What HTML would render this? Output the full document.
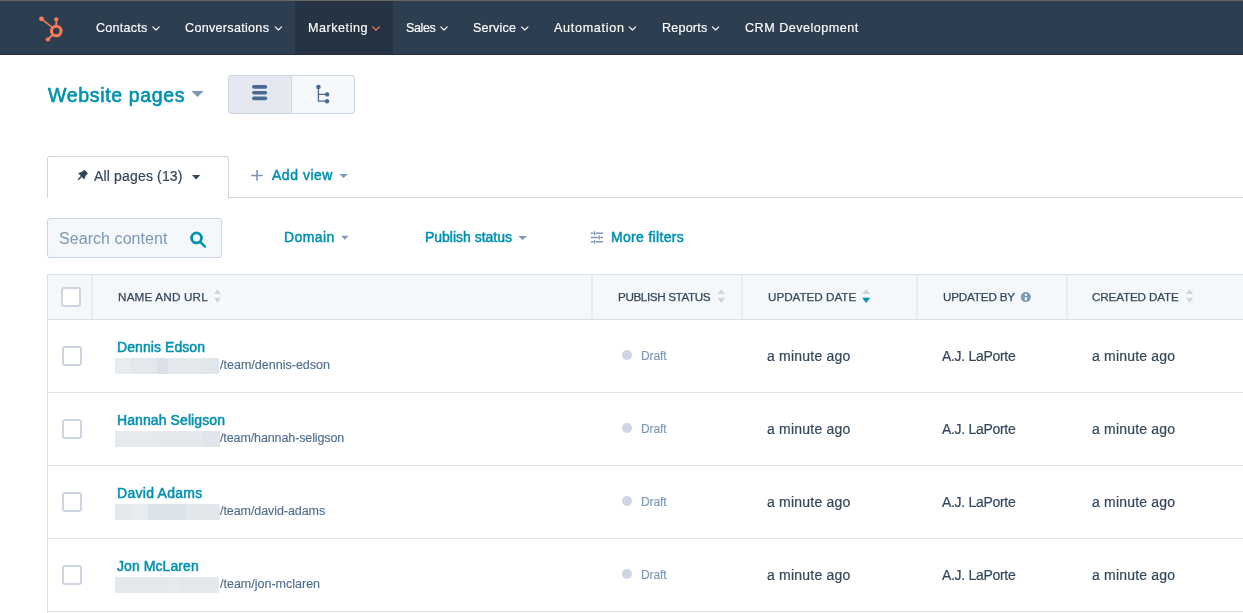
<!DOCTYPE html>
<html><head><meta charset="utf-8">
<style>
html,body{margin:0;padding:0;}
body{width:1243px;height:613px;overflow:hidden;position:relative;background:#fff;font-family:"Liberation Sans",sans-serif;}
.t{position:absolute;white-space:nowrap;will-change:transform;}
.a{position:absolute;}
svg{position:absolute;overflow:visible;}
</style></head><body>
<!-- top line + nav -->
<div class="a" style="left:0;top:0;width:1243px;height:1px;background:#676767"></div>
<div class="a" style="left:0;top:1px;width:1243px;height:54px;background:#2d3e50"></div>
<div class="a" style="left:0;top:54px;width:1243px;height:1px;background:#223143"></div>
<div class="a" style="left:295px;top:1px;width:98px;height:53px;background:#253342"></div>
<!-- logo -->
<svg style="left:0;top:0" width="1243" height="60">
 <g fill="#ff7a59" stroke="#ff7a59">
  <circle cx="56.3" cy="31" r="4.8" fill="none" stroke-width="3"/>
  <line x1="41.5" y1="18.8" x2="53" y2="28" stroke-width="1.6"/>
  <line x1="56.3" y1="19.5" x2="56.3" y2="26" stroke-width="1.8"/>
  <line x1="47.8" y1="39.5" x2="53" y2="34.5" stroke-width="1.8"/>
  <circle cx="41.5" cy="18.8" r="2.4" stroke="none"/>
  <circle cx="56.3" cy="19.3" r="2.1" stroke="none"/>
  <circle cx="47.8" cy="39.5" r="2.1" stroke="none"/>
 </g>
 <g fill="none" stroke="#ffffff" stroke-width="1.1" stroke-linecap="round" stroke-linejoin="round">
  <polyline points="152.8,26.8 156,30 159.2,26.8"/>
  <polyline points="275.2,26.8 278.4,30 281.6,26.8"/>
  <polyline points="440.8,26.8 444,30 447.2,26.8"/>
  <polyline points="521.6,26.8 524.8,30 528,26.8"/>
  <polyline points="629.2,26.8 632.4,30 635.6,26.8"/>
  <polyline points="712.4,26.8 715.6,30 718.8,26.8"/>
 </g>
 <polyline points="372.6,26.8 376,30.2 379.4,26.8" fill="none" stroke="#ff7a59" stroke-width="1.2" stroke-linecap="round" stroke-linejoin="round"/>
</svg>
<!-- title caret -->
<svg style="left:0;top:0" width="1" height="1">
 <polygon points="191.3,91 203.7,91 197.5,97" fill="#7c98b6"/>
</svg>
<!-- toggle -->
<div class="a" style="left:228px;top:75px;width:125px;height:37px;border:1px solid #cbd6e2;border-radius:3px;background:#f5f8fa;overflow:hidden">
  <div class="a" style="left:0;top:0;width:62px;height:37px;background:#e5e8f0;border-right:1px solid #cbd6e2"></div>
</div>
<svg style="left:0;top:0" width="1" height="1">
 <g fill="#4a6a92">
  <rect x="252" y="85" width="15.2" height="3.7" rx="1.8"/>
  <rect x="252" y="90.9" width="15.2" height="3.7" rx="1.8"/>
  <rect x="252" y="96.5" width="15.2" height="3.7" rx="1.8"/>
  <circle cx="318.4" cy="87" r="2.3"/>
  <circle cx="327.1" cy="94.4" r="2.2"/>
  <circle cx="327.1" cy="101.2" r="2.2"/>
 </g>
 <path d="M318.4,87 V101.2 H327 M318.4,94.4 H327" fill="none" stroke="#4a6a92" stroke-width="1.3"/>
</svg>
<!-- tabs -->
<div class="a" style="left:229px;top:197px;width:1014px;height:1px;background:#cbd6e2"></div>
<div class="a" style="left:47px;top:156px;width:180px;height:41px;border:1px solid #cbd6e2;border-bottom:none;border-radius:3px 3px 0 0;background:#fff"></div>
<svg style="left:0;top:0" width="1" height="1">
 <path d="M84.43,169.82 L87.95,173.34 L85.75,175.69 L84.28,179.51 L78.11,173.19 L81.93,171.87 Z" fill="#33475b"/><line x1="81.4" y1="176.4" x2="78.6" y2="179.3" stroke="#33475b" stroke-width="1.5" stroke-linecap="round"/>
 <polygon points="192,175 200.3,175 196.15,179.4" fill="#33475b"/>
 <path d="M257,170.1 V180.8 M251.2,175.5 H262.8" stroke="#7c98b6" stroke-width="1.6" fill="none"/>
 <polygon points="339.4,174 347.7,174 343.55,178" fill="#7c98b6"/>
</svg>
<!-- search -->
<div class="a" style="left:47px;top:218px;width:173px;height:38px;border:1px solid #cbd6e2;border-radius:3px;background:#f5f8fa"></div>
<svg style="left:0;top:0" width="1" height="1">
 <circle cx="196.5" cy="237.9" r="4.95" fill="none" stroke="#0091ae" stroke-width="2.8"/>
 <line x1="200.2" y1="241.8" x2="205" y2="246.6" stroke="#0091ae" stroke-width="2.4" stroke-linecap="round"/>
 <polygon points="341.1,235.8 348.6,235.8 344.85,239.7" fill="#7c98b6"/>
 <polygon points="518.3,236 526.8,236 522.55,240" fill="#7c98b6"/>
 <g stroke="#7c98b6" stroke-width="1.3" fill="none">
  <path d="M590.8,233.2 H593.4 M595.6,233.2 H603 M590.8,237.5 H598.2 M600.4,237.5 H603 M590.8,241.8 H593.4 M595.6,241.8 H603" stroke-width="1.5"/>
  <path d="M594.5,231.3 V235.1 M599.3,235.6 V239.4 M594.5,239.9 V243.7" stroke-width="1.3"/>
 </g>
</svg>
<!-- table -->
<div class="a" style="left:47px;top:274px;width:1196px;height:1px;background:#dbe0e7"></div>
<div class="a" style="left:47px;top:275px;width:1196px;height:44px;background:#f5f8fa"></div>
<div class="a" style="left:47px;top:319px;width:1196px;height:1px;background:#dbe0e7"></div>
<div class="a" style="left:47px;top:274px;width:1px;height:339px;background:#dde2ea"></div>
<div class="a" style="left:91px;top:275px;width:2px;height:44px;background:#e8ebef"></div>
<div class="a" style="left:591px;top:275px;width:2px;height:44px;background:#e8ebef"></div>
<div class="a" style="left:741px;top:275px;width:2px;height:44px;background:#e8ebef"></div>
<div class="a" style="left:916px;top:275px;width:2px;height:44px;background:#e8ebef"></div>
<div class="a" style="left:1066px;top:275px;width:2px;height:44px;background:#e8ebef"></div>
<div class="a" style="left:47px;top:392px;width:1196px;height:1px;background:#dfe3eb"></div>
<div class="a" style="left:47px;top:465px;width:1196px;height:1px;background:#dfe3eb"></div>
<div class="a" style="left:47px;top:538px;width:1196px;height:1px;background:#dfe3eb"></div>
<div class="a" style="left:47px;top:611px;width:1196px;height:1px;background:#dfe3eb"></div>
<!-- checkboxes -->
<div class="a" style="left:61px;top:287px;width:16px;height:16px;border:2px solid #cbd6e2;border-radius:3px;background:#fff"></div>
<div class="a" style="left:62px;top:346px;width:16px;height:16px;border:2px solid #cbd6e2;border-radius:3px;background:#fff"></div>
<div class="a" style="left:62px;top:419px;width:16px;height:16px;border:2px solid #cbd6e2;border-radius:3px;background:#fff"></div>
<div class="a" style="left:62px;top:492px;width:16px;height:16px;border:2px solid #cbd6e2;border-radius:3px;background:#fff"></div>
<div class="a" style="left:62px;top:565px;width:16px;height:16px;border:2px solid #cbd6e2;border-radius:3px;background:#fff"></div>
<!-- sort icons -->
<svg style="left:0;top:0" width="1" height="1">
 <g fill="#cbd6e2">
  <polygon points="214.2,293.9 220.8,293.9 217.5,289.3"/><polygon points="214.2,297.7 220.8,297.7 217.5,302.9"/>
  <polygon points="717.4,293.9 725,293.9 721.2,289.3"/><polygon points="717.4,297.7 725,297.7 721.2,302.9"/>
  <polygon points="862.1,293.9 870.2,293.9 866.15,289.3"/>
  <polygon points="1185.9,293.9 1193.3,293.9 1189.6,289.3"/><polygon points="1185.9,297.7 1193.3,297.7 1189.6,302.9"/>
 </g>
 <polygon points="862.1,297.7 870.2,297.7 866.15,302.9" fill="#0091ae"/>
 <circle cx="1025.8" cy="297.1" r="5" fill="#7c98b6"/>
 <rect x="1024.85" y="293.9" width="1.95" height="1.9" fill="#fff"/>
 <rect x="1024.85" y="297.3" width="1.95" height="3" fill="#fff"/>
 <g fill="#cbd6e2">
  <circle cx="627" cy="355" r="5"/><circle cx="627" cy="428" r="5"/><circle cx="627" cy="501" r="5"/><circle cx="627" cy="574" r="5"/>
 </g>
</svg>
<!-- redacted blocks -->
<div class="a" style="left:115px;top:358px;height:16px;width:16px;background:#e8ecf0"></div>
<div class="a" style="left:131px;top:358px;height:16px;width:26px;background:#e4e8ed"></div>
<div class="a" style="left:157px;top:358px;height:16px;width:11px;background:#d9e0e8"></div>
<div class="a" style="left:168px;top:358px;height:16px;width:34px;background:#e4e8ed"></div>
<div class="a" style="left:202px;top:358px;height:16px;width:17px;background:#e1e6ea"></div>
<div class="a" style="left:115px;top:431px;height:16px;width:39px;background:#e6eaee"></div>
<div class="a" style="left:154px;top:431px;height:16px;width:49px;background:#e5e9ed"></div>
<div class="a" style="left:203px;top:431px;height:16px;width:17px;background:#e1e5eb"></div>
<div class="a" style="left:115px;top:504px;height:16px;width:17px;background:#e5e9ee"></div>
<div class="a" style="left:132px;top:504px;height:16px;width:16px;background:#e8ecf0"></div>
<div class="a" style="left:148px;top:504px;height:16px;width:37px;background:#dce2e9"></div>
<div class="a" style="left:185px;top:504px;height:16px;width:35px;background:#e3e7ec"></div>
<div class="a" style="left:115px;top:577px;height:16px;width:53px;background:#e5e9ed"></div>
<div class="a" style="left:168px;top:577px;height:16px;width:11px;background:#e6eaee"></div>
<div class="a" style="left:179px;top:577px;height:16px;width:14px;background:#e3e8ec"></div>
<div class="a" style="left:193px;top:577px;height:16px;width:26px;background:#e5e9ee"></div>
<div class="t" style="left:95.50px;top:22.13px;font-size:12.6px;line-height:12.6px;color:#ffffff;-webkit-text-stroke:0.15px #ffffff;letter-spacing:0.243px;">Contacts</div>
<div class="t" style="left:184.80px;top:22.13px;font-size:12.6px;line-height:12.6px;color:#ffffff;-webkit-text-stroke:0.15px #ffffff;letter-spacing:0.288px;">Conversations</div>
<div class="t" style="left:307.50px;top:22.13px;font-size:12.6px;line-height:12.6px;color:#ffffff;-webkit-text-stroke:0.15px #ffffff;letter-spacing:0.525px;">Marketing</div>
<div class="t" style="left:405.50px;top:22.13px;font-size:12.6px;line-height:12.6px;color:#ffffff;-webkit-text-stroke:0.15px #ffffff;letter-spacing:-0.425px;">Sales</div>
<div class="t" style="left:473.40px;top:22.13px;font-size:12.6px;line-height:12.6px;color:#ffffff;-webkit-text-stroke:0.15px #ffffff;letter-spacing:0.167px;">Service</div>
<div class="t" style="left:553.90px;top:22.13px;font-size:12.6px;line-height:12.6px;color:#ffffff;-webkit-text-stroke:0.15px #ffffff;letter-spacing:0.694px;">Automation</div>
<div class="t" style="left:662.10px;top:22.13px;font-size:12.6px;line-height:12.6px;color:#ffffff;-webkit-text-stroke:0.15px #ffffff;letter-spacing:0.183px;">Reports</div>
<div class="t" style="left:745.20px;top:22.13px;font-size:12.6px;line-height:12.6px;color:#ffffff;-webkit-text-stroke:0.15px #ffffff;letter-spacing:0.496px;">CRM Development</div>
<div class="t" style="left:47.50px;top:86.29px;font-size:19.5px;line-height:19.5px;color:#0091ae;-webkit-text-stroke:0.6px #0091ae;letter-spacing:0.662px;">Website pages</div>
<div class="t" style="left:94.40px;top:169.05px;font-size:14px;line-height:14px;color:#33475b;-webkit-text-stroke:0.2px #33475b;letter-spacing:0.162px;">All pages (13)</div>
<div class="t" style="left:272.30px;top:167.95px;font-size:14px;line-height:14px;color:#0091ae;-webkit-text-stroke:0.5px #0091ae;letter-spacing:0.521px;">Add view</div>
<div class="t" style="left:58.50px;top:230.56px;font-size:16px;line-height:16px;color:#7c98b6;letter-spacing:0.065px;">Search content</div>
<div class="t" style="left:284.00px;top:229.85px;font-size:14px;line-height:14px;color:#0091ae;-webkit-text-stroke:0.5px #0091ae;letter-spacing:0.430px;">Domain</div>
<div class="t" style="left:424.80px;top:229.95px;font-size:14px;line-height:14px;color:#0091ae;-webkit-text-stroke:0.5px #0091ae;letter-spacing:-0.012px;">Publish status</div>
<div class="t" style="left:611.40px;top:229.95px;font-size:14px;line-height:14px;color:#0091ae;-webkit-text-stroke:0.5px #0091ae;letter-spacing:0.323px;">More filters</div>
<div class="t" style="left:117.70px;top:290.80px;font-size:11.7px;line-height:11.7px;color:#33475b;-webkit-text-stroke:0.25px #33475b;letter-spacing:0.186px;">NAME AND URL</div>
<div class="t" style="left:617.70px;top:290.80px;font-size:11.7px;line-height:11.7px;color:#33475b;-webkit-text-stroke:0.25px #33475b;letter-spacing:-0.388px;">PUBLISH STATUS</div>
<div class="t" style="left:767.70px;top:290.80px;font-size:11.7px;line-height:11.7px;color:#33475b;-webkit-text-stroke:0.25px #33475b;letter-spacing:-0.032px;">UPDATED DATE</div>
<div class="t" style="left:942.70px;top:290.80px;font-size:11.7px;line-height:11.7px;color:#33475b;-webkit-text-stroke:0.25px #33475b;letter-spacing:-0.189px;">UPDATED BY</div>
<div class="t" style="left:1092.40px;top:290.80px;font-size:11.7px;line-height:11.7px;color:#33475b;-webkit-text-stroke:0.25px #33475b;letter-spacing:-0.159px;">CREATED DATE</div>
<div class="t" style="left:117.40px;top:340.15px;font-size:14px;line-height:14px;color:#0091ae;-webkit-text-stroke:0.5px #0091ae;letter-spacing:0.077px;">Dennis Edson</div>
<div class="t" style="left:219.50px;top:358.62px;font-size:12.5px;line-height:12.5px;color:#516f90;-webkit-text-stroke:0.15px #516f90;letter-spacing:0.012px;">/team/dennis-edson</div>
<div class="t" style="left:640.80px;top:350.14px;font-size:12px;line-height:12px;color:#7c98b6;-webkit-text-stroke:0.15px #7c98b6;letter-spacing:-0.075px;">Draft</div>
<div class="t" style="left:767.30px;top:349.05px;font-size:14px;line-height:14px;color:#33475b;-webkit-text-stroke:0.2px #33475b;letter-spacing:0.214px;">a minute ago</div>
<div class="t" style="left:942.10px;top:349.05px;font-size:14px;line-height:14px;color:#33475b;-webkit-text-stroke:0.2px #33475b;letter-spacing:-0.305px;">A.J. LaPorte</div>
<div class="t" style="left:1092.10px;top:349.05px;font-size:14px;line-height:14px;color:#33475b;-webkit-text-stroke:0.2px #33475b;letter-spacing:0.186px;">a minute ago</div>
<div class="t" style="left:117.40px;top:413.15px;font-size:14px;line-height:14px;color:#0091ae;-webkit-text-stroke:0.5px #0091ae;letter-spacing:0.096px;">Hannah Seligson</div>
<div class="t" style="left:219.50px;top:431.62px;font-size:12.5px;line-height:12.5px;color:#516f90;-webkit-text-stroke:0.15px #516f90;letter-spacing:-0.108px;">/team/hannah-seligson</div>
<div class="t" style="left:640.80px;top:423.14px;font-size:12px;line-height:12px;color:#7c98b6;-webkit-text-stroke:0.15px #7c98b6;letter-spacing:-0.075px;">Draft</div>
<div class="t" style="left:767.30px;top:422.05px;font-size:14px;line-height:14px;color:#33475b;-webkit-text-stroke:0.2px #33475b;letter-spacing:0.214px;">a minute ago</div>
<div class="t" style="left:942.10px;top:422.05px;font-size:14px;line-height:14px;color:#33475b;-webkit-text-stroke:0.2px #33475b;letter-spacing:-0.305px;">A.J. LaPorte</div>
<div class="t" style="left:1092.10px;top:422.05px;font-size:14px;line-height:14px;color:#33475b;-webkit-text-stroke:0.2px #33475b;letter-spacing:0.186px;">a minute ago</div>
<div class="t" style="left:117.40px;top:486.15px;font-size:14px;line-height:14px;color:#0091ae;-webkit-text-stroke:0.5px #0091ae;letter-spacing:0.280px;">David Adams</div>
<div class="t" style="left:219.50px;top:504.62px;font-size:12.5px;line-height:12.5px;color:#516f90;-webkit-text-stroke:0.15px #516f90;letter-spacing:-0.069px;">/team/david-adams</div>
<div class="t" style="left:640.80px;top:496.14px;font-size:12px;line-height:12px;color:#7c98b6;-webkit-text-stroke:0.15px #7c98b6;letter-spacing:-0.075px;">Draft</div>
<div class="t" style="left:767.30px;top:495.05px;font-size:14px;line-height:14px;color:#33475b;-webkit-text-stroke:0.2px #33475b;letter-spacing:0.214px;">a minute ago</div>
<div class="t" style="left:942.10px;top:495.05px;font-size:14px;line-height:14px;color:#33475b;-webkit-text-stroke:0.2px #33475b;letter-spacing:-0.305px;">A.J. LaPorte</div>
<div class="t" style="left:1092.10px;top:495.05px;font-size:14px;line-height:14px;color:#33475b;-webkit-text-stroke:0.2px #33475b;letter-spacing:0.186px;">a minute ago</div>
<div class="t" style="left:117.40px;top:559.15px;font-size:14px;line-height:14px;color:#0091ae;-webkit-text-stroke:0.5px #0091ae;letter-spacing:0.075px;">Jon McLaren</div>
<div class="t" style="left:219.50px;top:577.62px;font-size:12.5px;line-height:12.5px;color:#516f90;-webkit-text-stroke:0.15px #516f90;">/team/jon-mclaren</div>
<div class="t" style="left:640.80px;top:569.14px;font-size:12px;line-height:12px;color:#7c98b6;-webkit-text-stroke:0.15px #7c98b6;letter-spacing:-0.075px;">Draft</div>
<div class="t" style="left:767.30px;top:568.05px;font-size:14px;line-height:14px;color:#33475b;-webkit-text-stroke:0.2px #33475b;letter-spacing:0.214px;">a minute ago</div>
<div class="t" style="left:942.10px;top:568.05px;font-size:14px;line-height:14px;color:#33475b;-webkit-text-stroke:0.2px #33475b;letter-spacing:-0.305px;">A.J. LaPorte</div>
<div class="t" style="left:1092.10px;top:568.05px;font-size:14px;line-height:14px;color:#33475b;-webkit-text-stroke:0.2px #33475b;letter-spacing:0.186px;">a minute ago</div>
</body></html>
